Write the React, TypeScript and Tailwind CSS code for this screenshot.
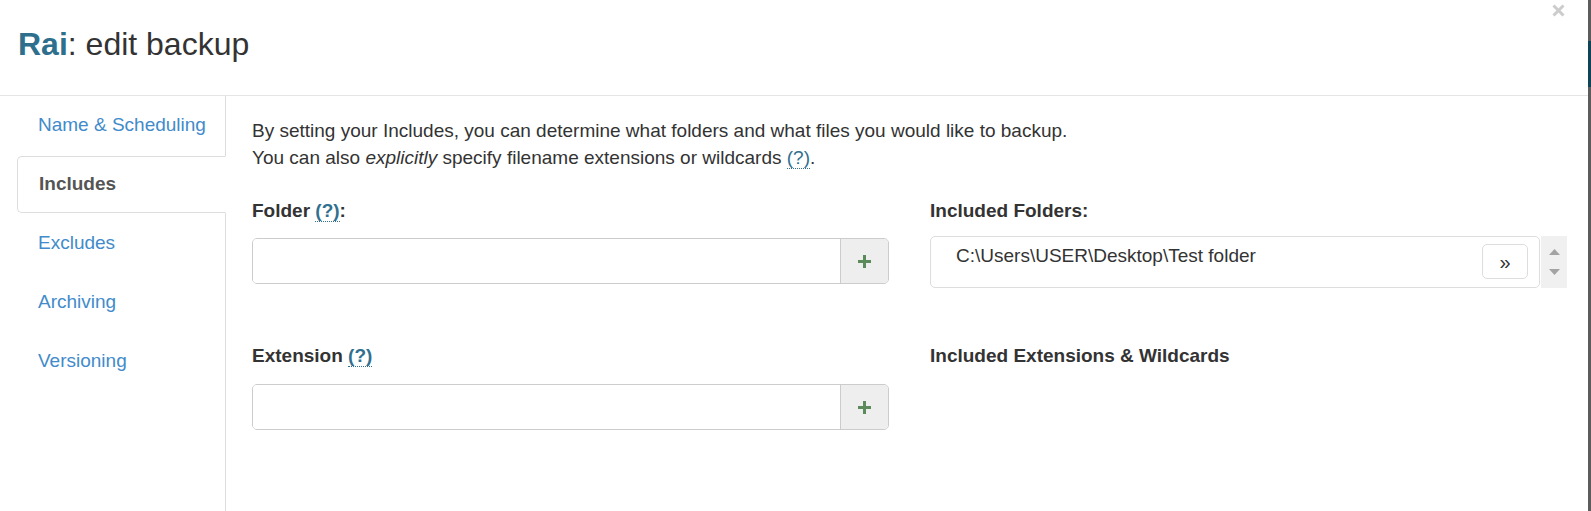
import { JSX } from "react";

const font = { fontFamily: '"Liberation Sans", Arial, sans-serif' };

function Help(): JSX.Element {
  return (
    <span className="text-[#31708f] border-b border-dotted border-[#31708f] leading-none cursor-help">
      (?)
    </span>
  );
}

function PlusIcon(): JSX.Element {
  return (
    <svg className="w-[13px] h-[13px]" viewBox="0 0 13 13">
      <path fill="#5b8b5b" d="M5 0h3v5h5v3H8v5H5V8H0V5h5z" />
    </svg>
  );
}

function AddInput(): JSX.Element {
  return (
    <div className="flex h-[46px] w-full border border-[#ccc] rounded-[5px] overflow-hidden shadow-[inset_0_1px_1px_rgba(0,0,0,0.075)]">
      <input className="flex-1 min-w-0 outline-none px-3 bg-white" type="text" />
      <button
        type="button"
        className="w-[48px] bg-[#eee] border-l border-[#ccc] flex items-center justify-center"
      >
        <PlusIcon />
      </button>
    </div>
  );
}

function App(): JSX.Element {
  const tabs = ["Name & Scheduling", "Includes", "Excludes", "Archiving", "Versioning"];

  return (
    <div className="w-full h-[511px] flex bg-white overflow-hidden text-[#333]" style={font}>
      <div className="flex-1 flex flex-col min-w-0">
        {/* Header */}
        <div className="h-[96px] shrink-0 border-b border-[#e5e5e5] flex justify-between pl-[18px] pr-[23px]">
          <h3 className="text-[32px] leading-none pt-[28px]">
            <span className="font-bold text-[#2e6f8e]">Rai</span>: edit backup
          </h3>
          <button type="button" aria-label="Close" className="mt-[4px] h-fit">
            <svg className="w-[13px] h-[13px]" viewBox="0 0 13 13">
              <path d="M1.5 1.5l10 10M11.5 1.5l-10 10" stroke="#cccccc" strokeWidth="3" />
            </svg>
          </button>
        </div>

        {/* Body */}
        <div className="flex flex-1 min-h-0">
          {/* Tabs */}
          <div className="w-[226px] shrink-0 border-r border-[#ddd] pl-[17px] pt-px">
            <ul className="flex flex-col gap-[2px] text-[19px]">
              {tabs.map((t) =>
                t === "Includes" ? (
                  <li
                    key={t}
                    className="h-[57px] -mr-px flex items-center pl-[21px] font-bold text-[#555] bg-white border border-[#ddd] border-r-white rounded-l-[5px]"
                  >
                    {t}
                  </li>
                ) : (
                  <li key={t} className="h-[57px] flex items-center pl-[21px] text-[#428bca]">
                    {t}
                  </li>
                )
              )}
            </ul>
          </div>

          {/* Content */}
          <div className="flex-1 pl-[26px] pr-[21px] pt-[21px] text-[19px] leading-[27px]">
            <p>By setting your Includes, you can determine what folders and what files you would like to backup.</p>
            <p>
              You can also <em>explicitly</em> specify filename extensions or wildcards <Help />.
            </p>

            <div className="grid grid-cols-2 gap-x-[41px] mt-[27px]">
              {/* Left column */}
              <div className="flex flex-col">
                <label className="font-bold leading-[25px]">
                  Folder <Help />:
                </label>
                <div className="mt-[15px]">
                  <AddInput />
                </div>
                <label className="font-bold leading-[25px] mt-[59px]">
                  Extension <Help />
                </label>
                <div className="mt-[16px]">
                  <AddInput />
                </div>
              </div>

              {/* Right column */}
              <div className="flex flex-col">
                <label className="font-bold leading-[25px]">Included Folders:</label>
                <div className="mt-[13px] flex h-[52px]">
                  <div className="flex-1 border border-[#ddd] rounded-[5px] flex items-start justify-between pl-[25px] pr-[11px]">
                    <span className="mt-[5px]">C:\Users\USER\Desktop\Test folder</span>
                    <button
                      type="button"
                      className="mt-[7px] w-[46px] h-[35px] border border-[#ddd] rounded-[5px] bg-white text-[20px] leading-none flex items-center justify-center"
                    >
                      »
                    </button>
                  </div>
                  <div className="w-[26px] ml-px bg-[#f0f0f0] flex flex-col items-center justify-around py-[6px]">
                    <svg className="w-[11px] h-[6px]" viewBox="0 0 11 6">
                      <path fill="#a3a3a3" d="M5.5 0L11 6H0z" />
                    </svg>
                    <svg className="w-[11px] h-[6px]" viewBox="0 0 11 6">
                      <path fill="#a3a3a3" d="M0 0h11L5.5 6z" />
                    </svg>
                  </div>
                </div>
                <label className="font-bold leading-[25px] mt-[55px]">Included Extensions &amp; Wildcards</label>
              </div>
            </div>
          </div>
        </div>
      </div>

      {/* Right page edge */}
      <div className="w-[3px] shrink-0 bg-[#5c5c5c] flex flex-col">
        <div className="mt-[41px] h-[46px] bg-[#0f4457]" />
      </div>
    </div>
  );
}

export default App;
